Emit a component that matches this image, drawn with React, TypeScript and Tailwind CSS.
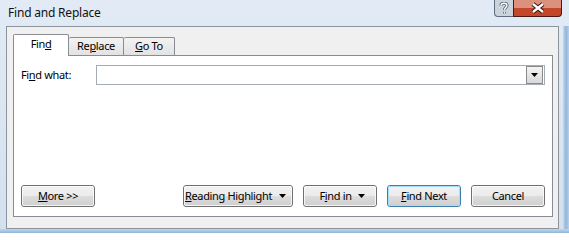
import type { ReactNode } from "react";

function Btn({
  children,
  className = "",
  focused = false,
}: {
  children: ReactNode;
  className?: string;
  focused?: boolean;
}) {
  return (
    <button
      type="button"
      className={`relative flex h-[22px] items-center rounded-[3px] border ${
        focused ? "border-[#3c7fb1]" : "border-[#707070]"
      } bg-[linear-gradient(#f2f2f2_0%,#ebebeb_50%,#dddddd_51%,#cfcfcf_100%)] ${className}`}
    >
      <span
        className={`pointer-events-none absolute inset-0 rounded-[2px] border ${
          focused ? "border-[#a6dcf7]" : "border-[#fcfcfc]/80"
        }`}
      />
      <span className="relative flex w-full items-center">{children}</span>
    </button>
  );
}

function Arrow() {
  return (
    <svg width="7" height="4" viewBox="0 0 7 4" className="shrink-0">
      <path d="M0 0h7L3.5 4z" fill="#000" />
    </svg>
  );
}

export default function App() {
  return (
    <div className="flex h-[233px] w-[569px] flex-col overflow-hidden bg-[linear-gradient(#e2ebf5,#d3e0ee)] font-['Noto_Sans',sans-serif] text-[11px] tracking-[-0.35px] text-black">
      {/* title bar */}
      <div className="flex h-[26px] shrink-0 items-start justify-between">
        <span className="pl-[8px] pt-[5px] text-[12px] leading-[16px] tracking-[-0.2px] text-[#111]">
          Find and Replace
        </span>
        <div className="mr-[7px] flex h-[17px] shrink-0">
          <div className="flex h-[17px] w-[19px] shrink-0 items-center justify-center rounded-bl-[4px] border-b border-l border-[#5f6d7e] bg-[#c9d3de]">
            <svg width="10" height="13" viewBox="0 0 10 13">
              <path
                d="M2 3.6C2 2.1 3.3 1.3 5 1.3S8 2.2 8 3.6C8 5.4 5.5 5.4 5.5 7.8M5.5 9.8v1.6"
                fill="none"
                stroke="#4e5865"
                strokeWidth="3"
              />
              <path
                d="M2 3.6C2 2.1 3.3 1.3 5 1.3S8 2.2 8 3.6C8 5.4 5.5 5.4 5.5 7.8M5.5 9.8v1.6"
                fill="none"
                stroke="#ffffff"
                strokeWidth="1.4"
              />
            </svg>
          </div>
          <div className="relative flex h-[17px] w-[49px] shrink-0 items-center justify-center overflow-hidden rounded-br-[4px] border-x border-b border-[#4a1a12] bg-[#c4472c]">
            <span className="absolute inset-x-0 top-0 h-[8px] bg-[#dc907e]" />
            <svg width="18" height="12" viewBox="0 0 18 12" className="relative">
              <path d="M4 2l10 8M14 2L4 10" stroke="#3a1510" strokeWidth="4.4" />
              <path d="M4 2l10 8M14 2L4 10" stroke="#ffffff" strokeWidth="2.4" />
            </svg>
          </div>
        </div>
      </div>

      <div className="flex flex-1">
        <div className="ml-[6px] flex h-[203px] w-[553px] flex-col border border-[#8c959f] bg-[#f0f0f0] pl-[6px] pt-[7px]">
          {/* tabs */}
          <div className="flex h-[21px] items-end">
            <div className="relative z-10 -mb-px flex h-[22px] w-[56px] items-center justify-center rounded-t-[2px] border border-b-0 border-[#898c95] bg-white pb-[2px]">
              Fin<u className="underline-offset-1">d</u>
            </div>
            <div className="flex h-[18px] w-[55px] items-center justify-center rounded-t-[2px] border border-b-0 border-l-0 border-[#898c95] bg-[linear-gradient(#f3f3f3,#e2e2e2)]">
              Re<u className="underline-offset-1">p</u>lace
            </div>
            <div className="flex h-[18px] w-[51px] items-center justify-center rounded-t-[2px] border border-b-0 border-l-0 border-[#898c95] bg-[linear-gradient(#f3f3f3,#e2e2e2)]">
              <u className="underline-offset-1">G</u>o To
            </div>
          </div>

          {/* panel */}
          <div className="flex h-[162px] w-[540px] flex-col border border-[#898c95] bg-white">
            <div className="mt-[9px] flex items-center">
              <span className="ml-[7px] w-[75px]">
                Fi<u className="underline-offset-1">n</u>d what:
              </span>
              <div className="mr-[7px] flex h-[20px] flex-1 items-center justify-end border border-[#a5acb5] pr-px">
                <div className="flex h-[18px] w-[17px] items-center justify-center border border-[#8a8a8a] bg-[linear-gradient(#f4f4f4,#d8d8d8)]">
                  <Arrow />
                </div>
              </div>
            </div>

            <div className="mb-[9px] mt-auto flex">
              <Btn className="ml-[7px] w-[74px]">
                <span className="w-full text-center">
                  <u className="underline-offset-1">M</u>ore &gt;&gt;
                </span>
              </Btn>
              <div className="ml-auto mr-[7px] flex gap-[10px]">
                <Btn className="w-[110px]">
                  <span className="pl-[1px]">
                    <u className="underline-offset-1">R</u>eading Highlight
                  </span>
                  <span className="ml-auto mr-[6px]">
                    <Arrow />
                  </span>
                </Btn>
                <Btn className="w-[74px]">
                  <span className="flex w-full items-center justify-center gap-[6px] pl-[4px]">
                    <span>
                      F<u className="underline-offset-1">i</u>nd in
                    </span>
                    <Arrow />
                  </span>
                </Btn>
                <Btn className="w-[74px]" focused>
                  <span className="w-full text-center">
                    <u className="underline-offset-1">F</u>ind Next
                  </span>
                </Btn>
                <Btn className="w-[74px]">
                  <span className="w-full text-center">Cancel</span>
                </Btn>
              </div>
            </div>
          </div>
        </div>
        <div className="ml-[4px] w-[6px] bg-[linear-gradient(90deg,#c9d9ea,#8fb6dc,#b9d1ea)]" />
      </div>
      <div className="h-[4px] bg-[linear-gradient(#c3d6ea,#8fb6dc)]" />
    </div>
  );
}
